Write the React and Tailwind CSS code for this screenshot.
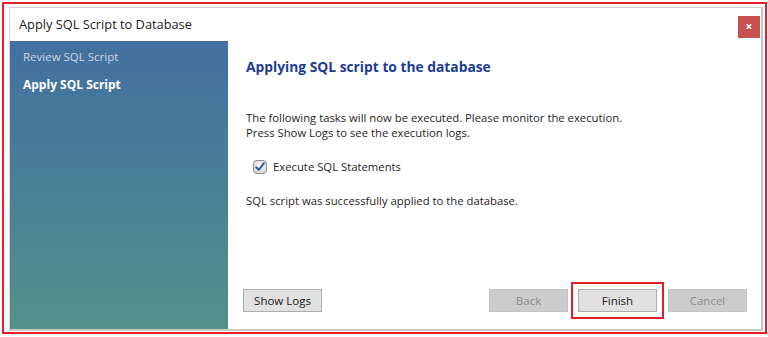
import React from 'react';

const font = { fontFamily: '"Segoe UI", "Open Sans", "Noto Sans", sans-serif' };

const CheckMark = () => (
  <svg width="14" height="14" viewBox="0 0 14 14" className="shrink-0">
    <defs>
      <radialGradient id="cbg" cx="50%" cy="40%" r="60%">
        <stop offset="0%" stopColor="#ffffff" />
        <stop offset="100%" stopColor="#d6d6d6" />
      </radialGradient>
    </defs>
    <rect x="0.5" y="0.5" width="13" height="13" rx="3.5" fill="url(#cbg)" stroke="#8e8f8f" />
    <path d="M3.2 7.2 L5.8 9.8 L10.8 3.4" fill="none" stroke="#2a5fb0" strokeWidth="2" strokeLinecap="round" strokeLinejoin="round" />
  </svg>
);

const Btn = ({ children, disabled }) => (
  <button
    className={
      disabled
        ? 'h-[23px] w-[79px] border border-[#c4c4c4] bg-[#cccccc] text-[11.5px] text-[#8d8d8d]'
        : 'h-[23px] w-[79px] border border-[#adadad] bg-[#e1e1e1] text-[11.5px] text-[#1a1a1a]'
    }
  >
    {children}
  </button>
);

export default function App() {
  return (
    <div className="w-[768px] h-[337px] bg-white p-[2px] overflow-hidden" style={font}>
      <div className="w-[765px] h-[332px] border-2 border-[#e3202a] pl-[5px] pt-[3px]">
        <div className="w-[754px] h-[324px] flex flex-col border-l border-t border-[#d4d4d4] border-r-2 border-b-2 border-r-[#c4c4c4] border-b-[#c8c8c8] bg-white">
          {/* title bar */}
          <div className="h-[33px] shrink-0 flex items-center justify-between pl-[9px] pr-[1px]">
            <span className="text-[12.8px] text-[#1b1b1b]">Apply SQL Script to Database</span>
            <div className="w-[22px] h-[22px] mt-[5px] bg-[#c75050] flex items-center justify-center text-white text-[12px] font-bold leading-none">
              ×
            </div>
          </div>
          {/* body */}
          <div className="flex flex-1 min-h-0">
            <div className="w-[218px] shrink-0 bg-gradient-to-b from-[#43709f] via-[#497f97] to-[#53918a] pl-[13px] pt-[7px]">
              <div className="text-[11.5px] text-[#c9d6e4]">Review SQL Script</div>
              <div className="mt-[11px] text-[12px] font-bold text-white">Apply SQL Script</div>
            </div>
            <div className="flex-1 flex flex-col pl-[18px] pr-[14px] pt-[16px] pb-[17px] text-[11.3px] text-[#1e1e1e]">
              <div className="text-[13.8px] font-bold text-[#1b3c92]">Applying SQL script to the database</div>
              <div className="mt-[32px] leading-[15px]">
                <div>The following tasks will now be executed. Please monitor the execution.</div>
                <div>Press Show Logs to see the execution logs.</div>
              </div>
              <div className="mt-[19px] ml-[7px] flex items-center gap-[6px]">
                <CheckMark />
                <span>Execute SQL Statements</span>
              </div>
              <div className="mt-[17px]">SQL script was successfully applied to the database.</div>
              <div className="mt-auto -ml-[3px] flex items-center">
                <Btn>Show Logs</Btn>
                <div className="flex-1" />
                <Btn disabled>Back</Btn>
                <div className="relative ml-[10px]">
                  <Btn>Finish</Btn>
                  <div className="absolute -left-[7px] -top-[7px] w-[93px] h-[37px] border-2 border-[#e3202a]" />
                </div>
                <div className="ml-[11px]">
                  <Btn disabled>Cancel</Btn>
                </div>
              </div>
            </div>
          </div>
        </div>
      </div>
    </div>
  );
}
